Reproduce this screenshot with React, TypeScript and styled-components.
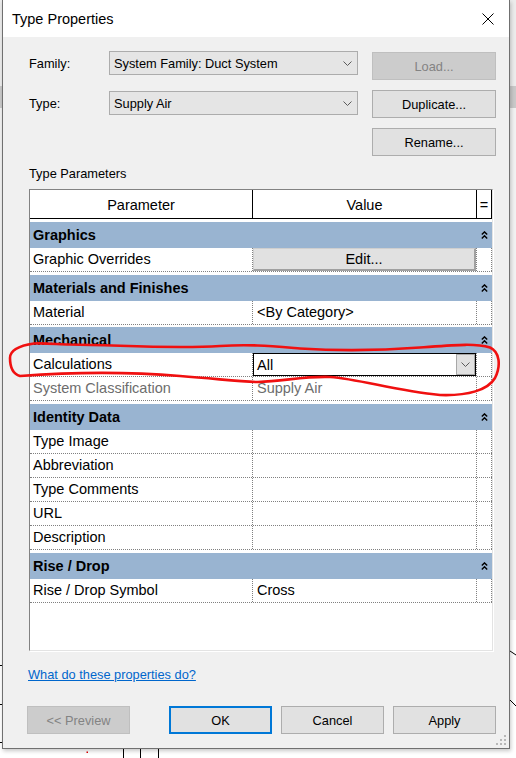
import React from "react";
import styled, { createGlobalStyle } from "styled-components";

const GlobalStyle = createGlobalStyle`
  html, body { margin: 0; padding: 0; width: 516px; height: 758px; overflow: hidden; }
  body { font-family: "Liberation Sans", Arial, sans-serif; color: #000; }
  #root { width: 516px; height: 758px; }
  * { box-sizing: border-box; }
`;

const COLS = "223px 224px 15px";

const Stage = styled.div`
  position: relative;
  width: 516px;
  height: 758px;
  overflow: hidden;
  background: linear-gradient(
    to bottom,
    #ececec 0,
    #ececec 86px,
    #c9c9c9 86px,
    #c9c9c9 108px,
    #f2f2f2 108px,
    #f2f2f2 620px,
    #ffffff 620px
  );
`;

const Backdrop = styled.svg`
  position: absolute;
  left: 0;
  top: 0;
  width: 516px;
  height: 758px;
  z-index: 0;
`;

const Annotation = styled.svg`
  position: absolute;
  left: 0;
  top: 0;
  width: 516px;
  height: 758px;
  z-index: 2;
  pointer-events: none;
`;

const Window = styled.div`
  position: relative;
  z-index: 1;
  margin-left: 2px;
  width: 508px;
  height: 749px;
  border: 1px solid #707070;
  border-top: none;
  background: #f0f0f0;
  display: flex;
  flex-direction: column;
  box-shadow: 1px 2px 4px rgba(0, 0, 0, 0.22);
`;

const TitleBar = styled.div`
  flex: none;
  height: 37px;
  background: #ffffff;
  display: flex;
  align-items: center;
  justify-content: space-between;
  padding: 0 15px 0 9px;
`;

const Title = styled.div`
  font-size: 14.5px;
  line-height: 18px;
  color: #000;
`;

const CloseIcon = styled.svg`
  width: 12px;
  height: 12px;
  display: block;
`;

const Body = styled.div`
  flex: 1;
  display: flex;
  flex-direction: column;
  padding: 14px 13px 0 26px;
`;

const TopSection = styled.div`
  display: flex;
  align-items: flex-start;
`;

const FieldGrid = styled.div`
  display: grid;
  grid-template-columns: 80px 249px;
  grid-auto-rows: 24px;
  row-gap: 16px;
`;

const FieldLabel = styled.div`
  display: flex;
  align-items: center;
  font-size: 12.8px;
`;

const Combo = styled.div`
  display: flex;
  align-items: center;
  justify-content: space-between;
  height: 24px;
  border: 1px solid #acacac;
  background: #e5e5e5;
  padding: 0 5px 0 4px;
  font-size: 12.8px;
`;

const ChevronIcon = styled.svg`
  display: block;
  flex: none;
`;

const SideButtons = styled.div`
  margin: 1px 0 0 14px;
  display: flex;
  flex-direction: column;
  gap: 10px;
`;

const DialogButton = styled.button<{ $w: number; $primary?: boolean }>`
  width: ${(p) => p.$w}px;
  height: 28px;
  margin: 0;
  padding: 0;
  font: inherit;
  font-size: 12.8px;
  color: #000;
  background: #e1e1e1;
  border: ${(p) => (p.$primary ? "2px solid #0078d7" : "1px solid #adadad")};
  display: flex;
  align-items: center;
  justify-content: center;

  &:disabled {
    background: #cccccc;
    border-color: #bfbfbf;
    color: #838383;
  }
`;

const SectionLabel = styled.div`
  margin-top: 8px;
  height: 20px;
  line-height: 20px;
  font-size: 12.8px;
`;

const Table = styled.div`
  margin-top: 5px;
  width: 464px;
  height: 462px;
  border: 1px solid;
  border-color: #828282 #e3e3e3 #e3e3e3 #828282;
  box-shadow: 1px 1px 0 #ffffff;
  background: #ffffff;
  display: flex;
  flex-direction: column;
  font-size: 14.5px;
`;

const HeaderRow = styled.div`
  display: grid;
  grid-template-columns: ${COLS};
  height: 29px;
  flex: none;
`;

const HeaderCell = styled.div`
  display: flex;
  align-items: center;
  justify-content: center;
  padding-top: 1px;
  border-right: 1px solid #000;
  border-bottom: 1px solid #000;
  color: #000;
`;

const GroupRow = styled.div<{ $gap: number }>`
  display: grid;
  grid-template-columns: ${COLS};
  height: 26px;
  flex: none;
  margin-top: ${(p) => p.$gap}px;
  background: #99b4d1;
`;

const GroupTitle = styled.div`
  grid-column: 1 / 3;
  display: flex;
  align-items: center;
  padding-left: 3px;
  font-weight: bold;
`;

const GroupToggle = styled.div`
  display: flex;
  align-items: center;
  justify-content: center;
  padding-right: 1px;
`;

const DataRow = styled.div`
  display: grid;
  grid-template-columns: ${COLS};
  height: 24px;
  flex: none;
  border-bottom: 1px dotted #808080;
`;

const Cell = styled.div<{ $muted?: boolean; $pad?: number }>`
  display: flex;
  align-items: center;
  padding-left: ${(p) => (p.$pad ?? 3)}px;
  padding-bottom: ${(p) => (p.$pad === 0 ? 0 : 1)}px;
  border-right: 1px dotted #808080;
  white-space: nowrap;
  overflow: hidden;
  color: ${(p) => (p.$muted ? "#6d6d6d" : "#000")};
`;

const CellButton = styled.button`
  width: 100%;
  height: 100%;
  margin: 0;
  padding: 0 0 1px;
  font: inherit;
  color: #000;
  background: #e1e1e1;
  border-style: solid;
  border-width: 1px 2px 2px 1px;
  border-color: #cfcfcf #a0a0a0 #a0a0a0 #cfcfcf;
`;

const CellCombo = styled.div`
  width: 100%;
  height: 100%;
  display: flex;
  align-items: center;
  justify-content: space-between;
  border: 1px solid #000;
  background: #fff;
  padding-left: 3px;
`;

const DropButton = styled.div`
  width: 19px;
  height: 21px;
  display: flex;
  align-items: center;
  justify-content: center;
  background: #e1e1e1;
  border: 1px solid #a8a8a8;
`;

const HelpLink = styled.a`
  display: block;
  margin: 16px 0 0 -1px;
  line-height: 16px;
  font-size: 12.8px;
  color: #0066cc;
  text-decoration: underline;
  align-self: flex-start;
`;

const ButtonRow = styled.div`
  display: flex;
  margin: 23px 0 0 -2px;
`;

const ActionGroup = styled.div`
  margin-left: auto;
  display: flex;
  gap: 9px;
`;

const Grip = styled.svg`
  position: absolute;
  right: 1px;
  bottom: 1px;
  width: 12px;
  height: 12px;
`;

const Chevron = ({ w = 9 }: { w?: number }) => (
  <ChevronIcon width={w} height={5} viewBox={`0 0 ${w} 5`}>
    <path
      d={`M0.5 0.5 L${w / 2} ${4.5} L${w - 0.5} 0.5`}
      fill="none"
      stroke="#5a5a5a"
      strokeWidth="1"
    />
  </ChevronIcon>
);

const DoubleCaret = () => (
  <svg width="7" height="8" viewBox="0 0 7 8" style={{ display: "block" }}>
    <path
      d="M0.8 3.6 L3.5 0.9 L6.2 3.6 M0.8 7.4 L3.5 4.7 L6.2 7.4"
      fill="none"
      stroke="#000"
      strokeWidth="1.4"
    />
  </svg>
);

type Param = { name: string; value?: string; muted?: boolean; kind?: "button" | "combo" };
type Group = { title: string; gap: number; params: Param[] };

const groups: Group[] = [
  { title: "Graphics", gap: 3, params: [{ name: "Graphic Overrides", value: "Edit...", kind: "button" }] },
  { title: "Materials and Finishes", gap: 3, params: [{ name: "Material", value: "<By Category>" }] },
  {
    title: "Mechanical",
    gap: 2,
    params: [
      { name: "Calculations", value: "All", kind: "combo" },
      { name: "System Classification", value: "Supply Air", muted: true },
    ],
  },
  {
    title: "Identity Data",
    gap: 3,
    params: [
      { name: "Type Image" },
      { name: "Abbreviation" },
      { name: "Type Comments" },
      { name: "URL" },
      { name: "Description" },
    ],
  },
  { title: "Rise / Drop", gap: 3, params: [{ name: "Rise / Drop Symbol", value: "Cross" }] },
];

const ValueCell = ({ p }: { p: Param }) => {
  if (p.kind === "button") {
    return (
      <Cell $pad={0}>
        <CellButton>{p.value}</CellButton>
      </Cell>
    );
  }
  if (p.kind === "combo") {
    return (
      <Cell $pad={0}>
        <CellCombo>
          <span>{p.value}</span>
          <DropButton>
            <Chevron w={9} />
          </DropButton>
        </CellCombo>
      </Cell>
    );
  }
  return (
    <Cell $pad={4} $muted={p.muted}>
      {p.value ?? ""}
    </Cell>
  );
};

export default function App() {
  return (
    <>
      <GlobalStyle />
      <Stage>
        <Backdrop viewBox="0 0 516 758">
          <line x1="0" y1="665.5" x2="3" y2="665.5" stroke="#000" strokeWidth="1" />
          <line x1="0" y1="704.5" x2="3" y2="704.5" stroke="#000" strokeWidth="1" />
          <line x1="0" y1="742.5" x2="3" y2="742.5" stroke="#000" strokeWidth="1" />
          <line x1="510" y1="651" x2="516" y2="655" stroke="#000" strokeWidth="1" />
          <line x1="510" y1="700" x2="516" y2="706" stroke="#000" strokeWidth="1" />
          <line x1="123.5" y1="749" x2="123.5" y2="758" stroke="#000" strokeWidth="1" />
          <line x1="140.5" y1="749" x2="140.5" y2="758" stroke="#000" strokeWidth="1" />
          <line x1="158.5" y1="749" x2="158.5" y2="758" stroke="#000" strokeWidth="1" />
          <rect x="86.5" y="751.5" width="1.5" height="1.5" fill="#e00000" />
        </Backdrop>

        <Window>
          <TitleBar>
            <Title>Type Properties</Title>
            <CloseIcon viewBox="0 0 12 12">
              <path d="M0.5 0.5 L11.5 11.5 M11.5 0.5 L0.5 11.5" stroke="#000" strokeWidth="1" />
            </CloseIcon>
          </TitleBar>

          <Body>
            <TopSection>
              <FieldGrid>
                <FieldLabel>Family:</FieldLabel>
                <Combo>
                  <span>System Family: Duct System</span>
                  <Chevron />
                </Combo>
                <FieldLabel>Type:</FieldLabel>
                <Combo>
                  <span>Supply Air</span>
                  <Chevron />
                </Combo>
              </FieldGrid>
              <SideButtons>
                <DialogButton $w={124} disabled>
                  Load...
                </DialogButton>
                <DialogButton $w={124}>Duplicate...</DialogButton>
                <DialogButton $w={124}>Rename...</DialogButton>
              </SideButtons>
            </TopSection>

            <SectionLabel>Type Parameters</SectionLabel>

            <Table>
              <HeaderRow>
                <HeaderCell>Parameter</HeaderCell>
                <HeaderCell>Value</HeaderCell>
                <HeaderCell>=</HeaderCell>
              </HeaderRow>
              {groups.map((g) => (
                <React.Fragment key={g.title}>
                  <GroupRow $gap={g.gap}>
                    <GroupTitle>{g.title}</GroupTitle>
                    <GroupToggle>
                      <DoubleCaret />
                    </GroupToggle>
                  </GroupRow>
                  {g.params.map((p) => (
                    <DataRow key={p.name}>
                      <Cell $muted={p.muted}>{p.name}</Cell>
                      <ValueCell p={p} />
                      <Cell $pad={0} />
                    </DataRow>
                  ))}
                </React.Fragment>
              ))}
            </Table>

            <HelpLink href="#">What do these properties do?</HelpLink>

            <ButtonRow>
              <DialogButton $w={103} disabled>
                {"<< Preview"}
              </DialogButton>
              <ActionGroup>
                <DialogButton $w={103} $primary>
                  OK
                </DialogButton>
                <DialogButton $w={103}>Cancel</DialogButton>
                <DialogButton $w={103}>Apply</DialogButton>
              </ActionGroup>
            </ButtonRow>
          </Body>

          <Grip viewBox="0 0 12 12">
            <rect x="8" y="0" width="2" height="2" fill="#b8b8b8" />
            <rect x="4" y="4" width="2" height="2" fill="#b8b8b8" />
            <rect x="8" y="4" width="2" height="2" fill="#b8b8b8" />
            <rect x="0" y="8" width="2" height="2" fill="#b8b8b8" />
            <rect x="4" y="8" width="2" height="2" fill="#b8b8b8" />
            <rect x="8" y="8" width="2" height="2" fill="#b8b8b8" />
          </Grip>
        </Window>

        <Annotation viewBox="0 0 516 758">
          <path
            d="M34 343.5
               C20 345.5, 10 350, 10 358
               C10 367, 13 374, 20 376
               C60 373, 120 371, 180 376
               C220 379, 240 382, 258 382
               C285 381, 305 376, 330 377
               C360 379, 395 391, 440 395
               C468 396, 488 390, 495 378
               C501 366, 500 352, 490 347.5
               C475 343, 455 345, 420 347.5
               C380 350.5, 340 351, 300 348.5
               C270 346, 250 344, 220 346
               C170 349, 120 345, 70 344.5
               C55 344, 44 343, 34 343.5"
            fill="none"
            stroke="#f01010"
            strokeWidth="2.6"
            strokeLinecap="round"
            strokeLinejoin="round"
          />
        </Annotation>
      </Stage>
    </>
  );
}
